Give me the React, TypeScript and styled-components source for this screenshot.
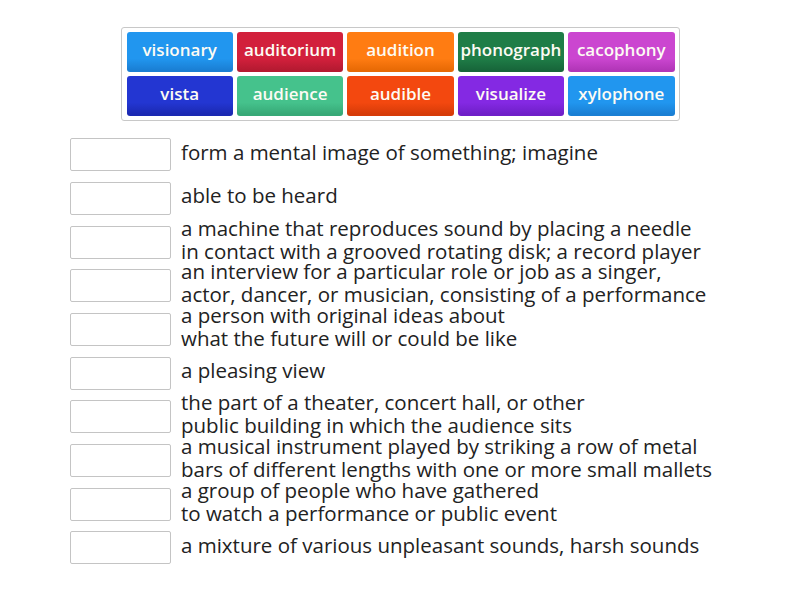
import React from "react";
import styled, { createGlobalStyle } from "styled-components";

const Global = createGlobalStyle`
  html, body { margin: 0; padding: 0; background: #ffffff; }
  body { font-family: "Open Sans", "Liberation Sans", sans-serif; }
`;

const Page = styled.div`
  width: 800px;
  height: 600px;
  box-sizing: border-box;
  padding-top: 27px;
  display: flex;
  flex-direction: column;
  align-items: center;
`;

const Bank = styled.div`
  width: 559px;
  box-sizing: border-box;
  border: 1px solid #c8c8c8;
  border-radius: 3px;
  padding: 4px 4px 4px 5px;
  display: grid;
  grid-template-columns: repeat(5, 1fr);
  column-gap: 4px;
  row-gap: 4px;
`;

const Tile = styled.div<{ $c: string; $d: string }>`
  height: 40px;
  box-sizing: border-box;
  border-radius: 3px;
  background: linear-gradient(to bottom, ${(p) => p.$c} 0%, ${(p) => p.$c} 70%, ${(p) => p.$d} 100%);
  border-bottom: 2px solid ${(p) => p.$d};
  display: flex;
  align-items: center;
  justify-content: center;
  color: #fdfbf4;
  font-family: "Open Sans", "Liberation Sans", sans-serif;
  font-weight: 600;
  font-size: 17px;
  line-height: 20px;
  white-space: nowrap;
  padding-bottom: 2px;
`;

const List = styled.div`
  width: 800px;
  margin-top: 12px;
  display: flex;
  flex-direction: column;
`;

const Row = styled.div`
  height: 43.67px;
  display: flex;
  align-items: center;
  padding-left: 70px;
`;

const Slot = styled.div`
  width: 101px;
  height: 33px;
  flex: none;
  box-sizing: border-box;
  border: 1px solid #c4c4c4;
  border-radius: 2px;
  background: #fff;
`;

const Clue = styled.div`
  margin-left: 10px;
  padding-bottom: 5px;
  font-family: "Open Sans", "Liberation Sans", sans-serif;
  font-size: 20.5px;
  line-height: 23px;
  color: #222222;
  white-space: pre-line;
`;

const tiles: { t: string; c: string; d: string }[] = [
  { t: "visionary", c: "#2196ef", d: "#1a7fd4" },
  { t: "auditorium", c: "#d2203c", d: "#b51a31" },
  { t: "audition", c: "#ff7c12", d: "#e86a05" },
  { t: "phonograph", c: "#1f7d47", d: "#17663a" },
  { t: "cacophony", c: "#cb46d0", d: "#b236b8" },
  { t: "vista", c: "#2336d2", d: "#1b29b2" },
  { t: "audience", c: "#45c28c", d: "#37a977" },
  { t: "audible", c: "#f3480f", d: "#d63b08" },
  { t: "visualize", c: "#8429e3", d: "#6f1fc8" },
  { t: "xylophone", c: "#2196ef", d: "#1a7fd4" },
];

const clues = [
  "form a mental image of something; imagine",
  "able to be heard",
  "a machine that reproduces sound by placing a needle\nin contact with a grooved rotating disk; a record player",
  "an interview for a particular role or job as a singer,\nactor, dancer, or musician, consisting of a performance",
  "a person with original ideas about\nwhat the future will or could be like",
  "a pleasing view",
  "the part of a theater, concert hall, or other\npublic building in which the audience sits",
  "a musical instrument played by striking a row of metal\nbars of different lengths with one or more small mallets",
  "a group of people who have gathered\nto watch a performance or public event",
  "a mixture of various unpleasant sounds, harsh sounds",
];

export default function App() {
  return (
    <>
      <Global />
      <Page>
        <Bank>
          {tiles.map((x) => (
            <Tile key={x.t} $c={x.c} $d={x.d}>
              {x.t}
            </Tile>
          ))}
        </Bank>
        <List>
          {clues.map((c, i) => (
            <Row key={i}>
              <Slot />
              <Clue>{c}</Clue>
            </Row>
          ))}
        </List>
      </Page>
    </>
  );
}
